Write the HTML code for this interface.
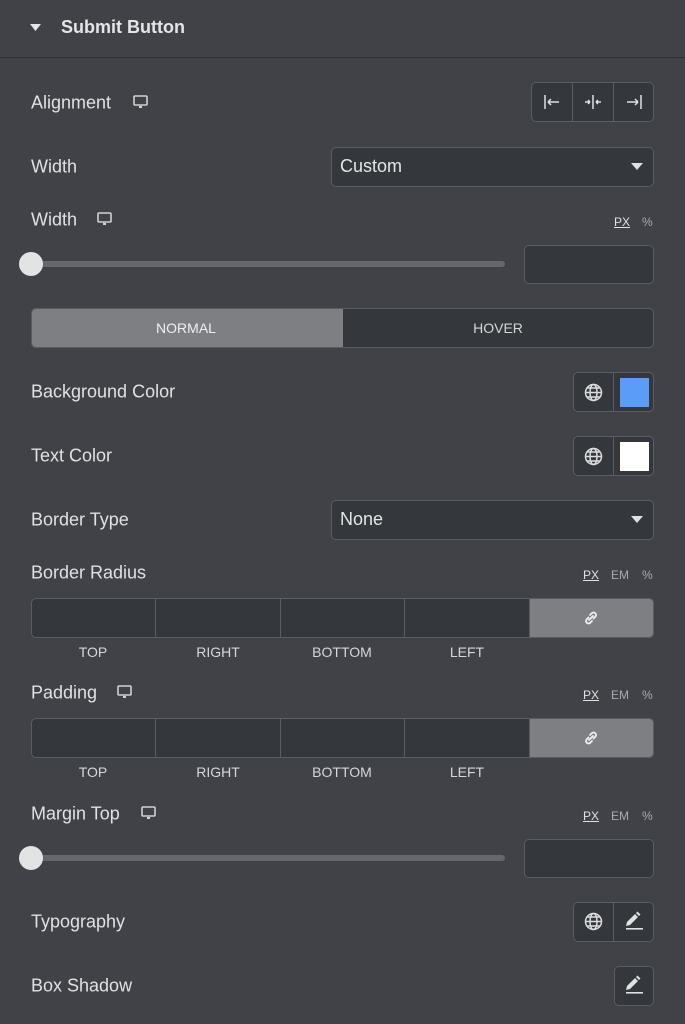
<!DOCTYPE html>
<html><head><meta charset="utf-8"><style>
*{box-sizing:border-box;margin:0;padding:0}
body{width:685px;height:1024px;background:#404248;font-family:"Liberation Sans",sans-serif;color:#e4e5e7;position:relative;overflow:hidden}
.a{position:absolute}
.lbl{position:absolute;left:31px;font-size:18px;color:#e0e1e3;transform:translateY(-50%)}
.box{position:absolute;background:#34373c;border:1px solid #5a5d63;border-radius:5px}
.u{position:absolute;font-size:12px;color:#a9abaf;transform:translateY(-50%)}
.u.on{color:#e0e1e3;text-decoration:underline}
.sm{position:absolute;font-size:14px;color:#d5d6d8;transform:translate(-50%,-50%)}
.cell{position:absolute;top:0;bottom:0;border-right:1px solid #5a5d63}
svg{position:absolute}
</style></head><body>
<div class="a" style="left:0;top:0;width:685px;height:58px;border-bottom:1px solid #2f3136"></div>
<svg style="left:30px;top:24px" width="11" height="8"><path d="M0 0H11L5.5 7z" fill="#e4e5e7"/></svg>
<div class="a" style="left:61px;top:17px;font-size:18px;font-weight:bold;color:#e4e5e7">Submit Button</div>

<div class="lbl" style="top:103px">Alignment</div>
<svg style="left:133px;top:95px" width="15" height="14"><rect x="1" y="1" width="13" height="9" rx="1" fill="none" stroke="#d0d1d4" stroke-width="1.6"/><rect x="6" y="11" width="3" height="2" fill="#d0d1d4"/></svg>
<div class="box" style="left:531px;top:82px;width:123px;height:40px">
<div class="cell" style="left:0;width:41px"></div><div class="cell" style="left:41px;width:41px"></div>
</div>
<svg style="left:544px;top:95px" width="16" height="14" stroke="#e0e1e3" stroke-width="1.5" fill="none"><path d="M1 0V14M4 7H15M4 7l3-3M4 7l3 3"/></svg>
<svg style="left:585px;top:95px" width="16" height="14" stroke="#e0e1e3" stroke-width="1.5" fill="none"><path d="M8 0V14M0 7H5M11 7H16M5 7l-2-2M5 7l-2 2M11 7l2-2M11 7l2 2"/></svg>
<svg style="left:626px;top:95px" width="16" height="14" stroke="#e0e1e3" stroke-width="1.5" fill="none"><path d="M15 0V14M1 7H12M12 7l-3-3M12 7l-3 3"/></svg>

<div class="lbl" style="top:167px">Width</div>
<div class="box" style="left:331px;top:147px;width:323px;height:40px"></div>
<div class="a" style="left:340px;top:156px;font-size:18px">Custom</div>
<svg style="left:631px;top:163px" width="12" height="8"><path d="M0 0H12L6 7z" fill="#e0e1e3"/></svg>

<div class="lbl" style="top:220px">Width</div>
<svg style="left:97px;top:212px" width="15" height="14"><rect x="1" y="1" width="13" height="9" rx="1" fill="none" stroke="#d0d1d4" stroke-width="1.6"/><rect x="6" y="11" width="3" height="2" fill="#d0d1d4"/></svg>
<div class="u on" style="left:614px;top:222px">PX</div><div class="u" style="left:642px;top:222px">%</div>
<div class="a" style="left:31px;top:261px;width:474px;height:6px;border-radius:3px;background:#65676c"></div>
<div class="a" style="left:19px;top:252px;width:24px;height:24px;border-radius:50%;background:#e2e3e5"></div>
<div class="box" style="left:524px;top:245px;width:130px;height:39px"></div>

<div class="box" style="left:31px;top:308px;width:623px;height:40px;overflow:hidden">
<div class="a" style="left:0;top:0;width:311px;height:40px;background:#7e7f83"></div></div>
<div class="sm" style="left:186px;top:328px;color:#f0f0f2">NORMAL</div>
<div class="sm" style="left:498px;top:328px">HOVER</div>

<div class="lbl" style="top:392px">Background Color</div>
<div class="box" style="left:573px;top:372px;width:81px;height:40px"><div class="cell" style="left:0;width:40px"></div>
<div class="a" style="left:46px;top:5px;width:29px;height:29px;background:#5b9cf8"></div></div>
<div class="lbl" style="top:456px">Text Color</div>
<div class="box" style="left:573px;top:436px;width:81px;height:40px"><div class="cell" style="left:0;width:40px"></div>
<div class="a" style="left:46px;top:5px;width:29px;height:29px;background:#fff"></div></div>

<div class="lbl" style="top:520px">Border Type</div>
<div class="box" style="left:331px;top:500px;width:323px;height:40px"></div>
<div class="a" style="left:340px;top:509px;font-size:18px">None</div>
<svg style="left:631px;top:516px" width="12" height="8"><path d="M0 0H12L6 7z" fill="#e0e1e3"/></svg>

<div class="lbl" style="top:573px">Border Radius</div>
<div class="u on" style="left:583px;top:575px">PX</div><div class="u" style="left:611px;top:575px">EM</div><div class="u" style="left:642px;top:575px">%</div>
<div class="box" style="left:31px;top:598px;width:623px;height:40px;overflow:hidden">
<div class="cell" style="left:0;width:124px"></div><div class="cell" style="left:124px;width:125px"></div><div class="cell" style="left:249px;width:124px"></div><div class="cell" style="left:373px;width:125px"></div>
<div class="a" style="left:498px;top:0;width:125px;height:40px;background:#7e7f83"></div></div>
<div class="sm" style="left:93px;top:652px">TOP</div><div class="sm" style="left:218px;top:652px">RIGHT</div><div class="sm" style="left:342px;top:652px">BOTTOM</div><div class="sm" style="left:467px;top:652px">LEFT</div>

<div class="lbl" style="top:693px">Padding</div>
<svg style="left:117px;top:685px" width="15" height="14"><rect x="1" y="1" width="13" height="9" rx="1" fill="none" stroke="#d0d1d4" stroke-width="1.6"/><rect x="6" y="11" width="3" height="2" fill="#d0d1d4"/></svg>
<div class="u on" style="left:583px;top:695px">PX</div><div class="u" style="left:611px;top:695px">EM</div><div class="u" style="left:642px;top:695px">%</div>
<div class="box" style="left:31px;top:718px;width:623px;height:40px;overflow:hidden">
<div class="cell" style="left:0;width:124px"></div><div class="cell" style="left:124px;width:125px"></div><div class="cell" style="left:249px;width:124px"></div><div class="cell" style="left:373px;width:125px"></div>
<div class="a" style="left:498px;top:0;width:125px;height:40px;background:#7e7f83"></div></div>
<div class="sm" style="left:93px;top:772px">TOP</div><div class="sm" style="left:218px;top:772px">RIGHT</div><div class="sm" style="left:342px;top:772px">BOTTOM</div><div class="sm" style="left:467px;top:772px">LEFT</div>

<svg style="left:583px;top:610px" width="16" height="16" stroke="#f0f0f2" stroke-width="1.8" fill="none" stroke-linecap="round"><path d="M7 5l2-2a2.5 2.5 0 0 1 3.5 3.5l-2 2M9 11l-2 2a2.5 2.5 0 0 1-3.5-3.5l2-2M6 10l4-4"/></svg>
<svg style="left:583px;top:730px" width="16" height="16" stroke="#f0f0f2" stroke-width="1.8" fill="none" stroke-linecap="round"><path d="M7 5l2-2a2.5 2.5 0 0 1 3.5 3.5l-2 2M9 11l-2 2a2.5 2.5 0 0 1-3.5-3.5l2-2M6 10l4-4"/></svg>

<div class="lbl" style="top:814px">Margin Top</div>
<svg style="left:141px;top:806px" width="15" height="14"><rect x="1" y="1" width="13" height="9" rx="1" fill="none" stroke="#d0d1d4" stroke-width="1.6"/><rect x="6" y="11" width="3" height="2" fill="#d0d1d4"/></svg>
<div class="u on" style="left:583px;top:816px">PX</div><div class="u" style="left:611px;top:816px">EM</div><div class="u" style="left:642px;top:816px">%</div>
<div class="a" style="left:31px;top:855px;width:474px;height:6px;border-radius:3px;background:#65676c"></div>
<div class="a" style="left:19px;top:846px;width:24px;height:24px;border-radius:50%;background:#e2e3e5"></div>
<div class="box" style="left:524px;top:839px;width:130px;height:39px"></div>

<div class="lbl" style="top:922px">Typography</div>
<div class="box" style="left:573px;top:902px;width:81px;height:40px"><div class="cell" style="left:0;width:40px"></div></div>
<div class="lbl" style="top:986px">Box Shadow</div>
<div class="box" style="left:614px;top:966px;width:40px;height:40px"></div>

<svg style="left:584px;top:383px" width="19" height="19" stroke="#dcdde0" stroke-width="1.5" fill="none"><circle cx="9.5" cy="9.5" r="8"/><ellipse cx="9.5" cy="9.5" rx="3.5" ry="8"/><path d="M1.5 9.5H17.5M3 5H16M3 14H16"/></svg>
<svg style="left:584px;top:447px" width="19" height="19" stroke="#dcdde0" stroke-width="1.5" fill="none"><circle cx="9.5" cy="9.5" r="8"/><ellipse cx="9.5" cy="9.5" rx="3.5" ry="8"/><path d="M1.5 9.5H17.5M3 5H16M3 14H16"/></svg>
<svg style="left:584px;top:912px" width="19" height="19" stroke="#dcdde0" stroke-width="1.5" fill="none"><circle cx="9.5" cy="9.5" r="8"/><ellipse cx="9.5" cy="9.5" rx="3.5" ry="8"/><path d="M1.5 9.5H17.5M3 5H16M3 14H16"/></svg>
<svg style="left:624px;top:911px" width="20" height="20" fill="#e0e1e3"><path d="M2 15l1-4 8-8 3 3-8 8z M12 2l1.5-1.5 3 3L15 5z"/><rect x="2" y="17" width="17" height="1.6"/></svg>
<svg style="left:624px;top:975px" width="20" height="20" fill="#e0e1e3"><path d="M2 15l1-4 8-8 3 3-8 8z M12 2l1.5-1.5 3 3L15 5z"/><rect x="2" y="17" width="17" height="1.6"/></svg>
</body></html>
